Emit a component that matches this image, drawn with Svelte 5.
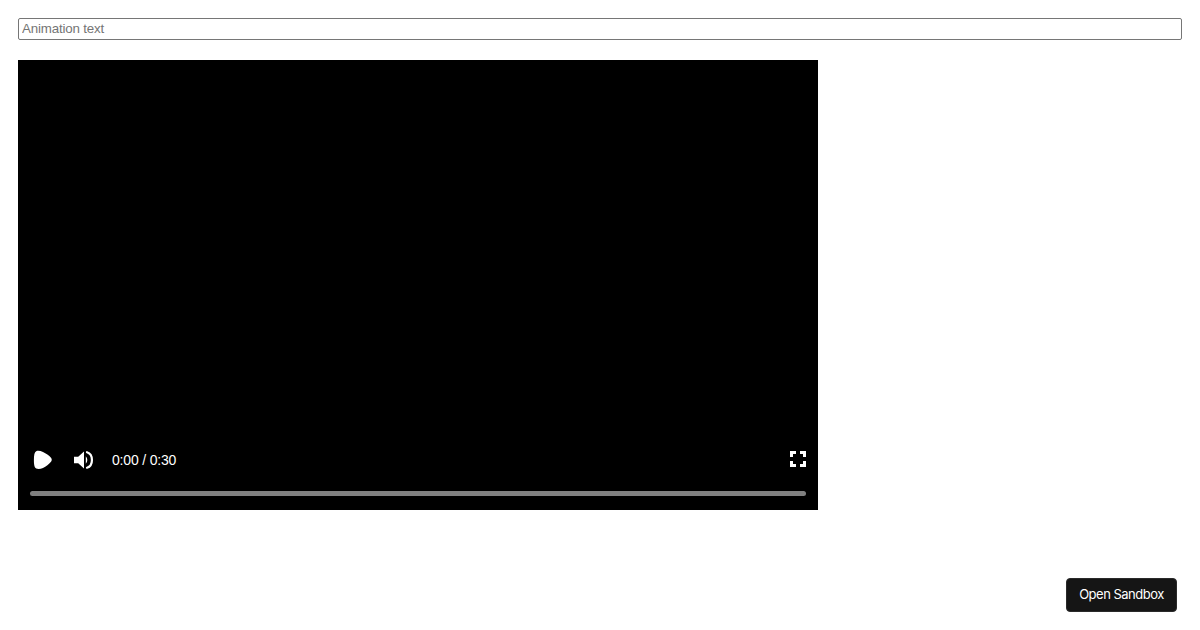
<script>
  let text = $state('');
</script>

<main class="page">
  <input class="text-input" type="text" placeholder="Animation text" bind:value={text} />

  <div class="player">
    <div class="controls">
      <svg class="play" width="20" height="20" viewBox="0 0 20 20" aria-hidden="true">
        <path d="M3.2 1.2C5 .4 7.5 .9 10 2c3 1.300 6 3.500 8 5.800 1 1.300 1 2.700 0 3.900-2 2.500-5 5-8 6.300-2.500 1-5 1.300-6.800.5C1.500 17.500 .9 15 .9 10S1.500 2 3.200 1.200Z" fill="#fff"/>
      </svg>
      <svg class="volume" width="20" height="20" viewBox="0 0 20 20" aria-hidden="true">
        <path d="M0 6.700h4.200L10 1.500v17L4.200 13.300H0Z" fill="#fff"/>
        <path d="M11.800 6.300c2 2 2 5.400 0 7.400Z" fill="#fff"/>
        <path d="M13 2.200c6.600 2 6.600 13.600 0 15.600" fill="none" stroke="#fff" stroke-width="2.200" stroke-linecap="round"/>
      </svg>
      <span class="time">0:00 / 0:30</span>
      <svg class="fullscreen" width="16" height="16" viewBox="0 0 16 16" aria-hidden="true">
        <path d="M0 0h6v3H3v3H0ZM10 0h6v6h-3V3h-3ZM0 10h3v3h3v3H0ZM13 10h3v6h-6v-3h3Z" fill="#fff"/>
      </svg>
    </div>
    <div class="track"></div>
  </div>

  <button class="sandbox" type="button">Open Sandbox</button>
</main>

<style>
  :global(body) {
    margin: 0;
    background: #fff;
    font-family: "Liberation Sans", Arial, sans-serif;
  }

  .page {
    display: flex;
    flex-direction: column;
    gap: 20px;
    padding: 18px;
    height: 630px;
    box-sizing: border-box;
    overflow: hidden;
  }

  .text-input {
    box-sizing: border-box;
    width: 100%;
    height: 22px;
    padding: 0 3px 2px;
    border: 1px solid #767676;
    border-radius: 2px;
    background: #fff;
    font-family: "Liberation Sans", Arial, sans-serif;
    font-size: 13.333px;
    letter-spacing: -0.18px;
    outline: none;
  }

  .text-input::placeholder {
    color: #757575;
  }

  .player {
    display: flex;
    flex-direction: column;
    justify-content: flex-end;
    width: 800px;
    height: 450px;
    box-sizing: border-box;
    padding: 0 12px 14px;
    background: #000;
  }

  .controls {
    display: flex;
    align-items: center;
    height: 20px;
    margin-bottom: 21px;
    padding-left: 3px;
    color: #fff;
  }

  .volume {
    margin-left: 21px;
  }

  .time {
    margin-left: 18px;
    font-size: 14px;
    letter-spacing: -0.18px;
    line-height: 20px;
  }

  .fullscreen {
    margin-left: auto;
    position: relative;
    top: -1px;
  }

  .track {
    height: 5px;
    border-radius: 3px;
    background: #808080;
  }

  .sandbox {
    position: fixed;
    right: 23px;
    bottom: 18px;
    width: 111px;
    height: 34px;
    padding: 0 0 2px;
    border: 1px solid #2a2a2a;
    border-radius: 4px;
    background: #151515;
    color: #fff;
    font-family: Inter, "Liberation Sans", sans-serif;
    font-size: 13px;
    letter-spacing: -0.5px;
    cursor: pointer;
  }
</style>
